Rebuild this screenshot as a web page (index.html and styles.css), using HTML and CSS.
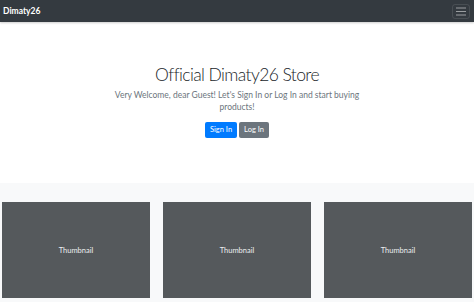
FILE: index.html
```html
<!DOCTYPE html>
<html lang="en">
<head>
    <meta charset="UTF-8">
    <meta name="viewport" content="width=device-width, initial-scale=1.0">
    <title>Dimaty26 Store</title>
    <link rel="stylesheet" href="styles.css">
</head>
<body>
    <header class="navbar">
        <a class="brand" href="#">Dimaty26</a>
        <button class="toggler" type="button">
            <svg width="10" height="9" viewBox="0 0 10 9">
                <path d="M0 1h10M0 4.5h10M0 8h10" stroke="rgba(255,255,255,0.5)" stroke-width="1.2"/>
            </svg>
        </button>
    </header>

    <section class="jumbotron">
        <h1>Official Dimaty26 Store</h1>
        <p class="lead">Very Welcome, dear Guest! Let's Sign In or Log In and start buying products!</p>
        <div class="actions">
            <a class="btn btn-primary" href="#">Sign In</a>
            <a class="btn btn-secondary" href="#">Log In</a>
        </div>
    </section>

    <div class="album">
        <div class="row">
            <div class="card">Thumbnail</div>
            <div class="card">Thumbnail</div>
            <div class="card">Thumbnail</div>
        </div>
    </div>
</body>
</html>
```

FILE: styles.css
```css
body {
    font-family: Lato, "Noto Sans", sans-serif;
    margin: 0;
    padding: 0;
    background-color: #fff;
    color: #212529;
}
.navbar {
    background: #343a40;
    height: 22px;
    display: flex;
    align-items: center;
    justify-content: space-between;
    padding: 0 4px 0 3px;
    box-shadow: 0 1px 2px rgba(0, 0, 0, 0.2);
}
.brand {
    color: #fff;
    font-weight: bold;
    font-size: 8.5px;
    text-decoration: none;
}
.toggler {
    width: 18px;
    height: 15px;
    padding: 0;
    display: flex;
    align-items: center;
    justify-content: center;
    background: transparent;
    border: 1px solid rgba(255, 255, 255, 0.1);
    border-radius: 3px;
}
.jumbotron {
    height: 161px;
    box-sizing: border-box;
    padding-top: 41px;
    text-align: center;
}
.jumbotron h1 {
    margin: 0;
    font-weight: 300;
    font-size: 17.5px;
    letter-spacing: -0.6px;
    line-height: 24px;
    color: #212529;
}
.lead {
    width: 250px;
    margin: 2px auto 9px;
    font-size: 8.5px;
    line-height: 12px;
    color: #6c757d;
}
.actions {
    display: flex;
    justify-content: center;
    gap: 2px;
}
.btn {
    display: inline-block;
    padding: 0 5px;
    height: 16px;
    line-height: 16px;
    font-size: 7.5px;
    color: #fff;
    text-decoration: none;
    border-radius: 2px;
}
.btn-primary {
    background: #007bff;
}
.btn-secondary {
    background: #6c757d;
}
.album {
    background: #f8f9fa;
    padding: 19px 2px 4px;
}
.row {
    display: grid;
    grid-template-columns: repeat(3, 1fr);
    gap: 13px;
}
.card {
    height: 96px;
    background: #55595c;
    color: #eceeef;
    font-size: 7.5px;
    display: flex;
    align-items: center;
    justify-content: center;
}
```
